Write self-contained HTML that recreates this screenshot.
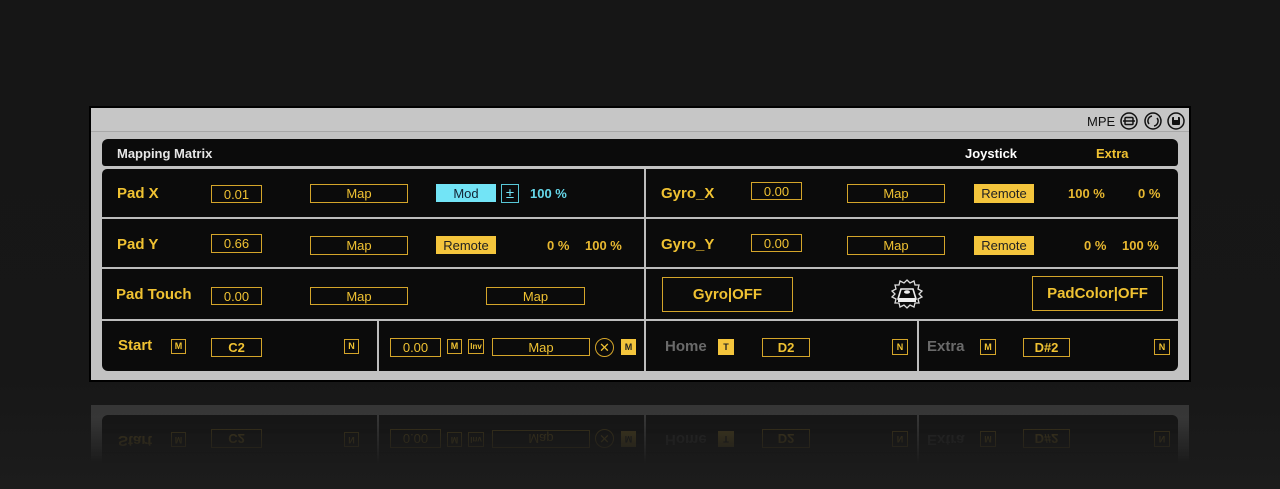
<!DOCTYPE html>
<html><head><meta charset="utf-8"><style>
*{margin:0;padding:0;box-sizing:border-box}
html,body{width:1280px;height:489px;overflow:hidden;background:#171717;font-family:"Liberation Sans",Arial,sans-serif}
.a{position:absolute}
.t{position:absolute;font-weight:bold;color:#f0c232;white-space:nowrap;line-height:1}
.b{position:absolute;border:1.5px solid #d4a52a;color:#f0c232;font-size:13px;display:flex;align-items:center;justify-content:center;line-height:1}
.f{background:#f4c53c;color:#222;border-color:#f4c53c}
.s{font-size:9px;font-weight:bold;border-width:1.5px}
.hl{position:absolute;height:2px;background:#bdbdbd}
.vl{position:absolute;width:2px;background:#bdbdbd}
.pct{position:absolute;font-size:13px;font-weight:bold;color:#e8b830;line-height:1}
</style></head><body>
<div class="a" style="left:0;top:0;width:1280px;height:489px;background:linear-gradient(#161616 0,#171717 380px,#1c1c1c 489px)"></div>

<div class="a" style="left:89px;top:106px;width:1102px;height:276px;background:#000"></div>
<div class="a" style="left:91px;top:108px;width:1098px;height:272px;background:#c2c2c2"></div>
<div class="a" style="left:91px;top:108px;width:1098px;height:24px;background:#c6c6c6;border-bottom:1px solid #a8a8a8"></div>
<div class="t" style="left:1087px;top:115px;font-size:13px;font-weight:normal;color:#111">MPE</div>
<svg class="a" style="left:1119px;top:111px" width="68" height="20" viewBox="0 0 68 20">
<g fill="none" stroke="#111" stroke-width="1.5">
<circle cx="10" cy="10" r="8"/><circle cx="34" cy="10" r="8"/><circle cx="57" cy="10" r="8"/>
<rect x="6" y="6.5" width="8" height="7" rx="1"/><path d="M4 10h12"/>
<path d="M30 13a5 5 0 0 1 3-8M38 7a5 5 0 0 1-3 8"/>
</g><rect x="53" y="6" width="8" height="8" rx="1" fill="#111"/><rect x="55" y="6" width="4" height="3" fill="#c6c6c6"/>
</svg>

<div class="a" style="left:102px;top:139px;width:1076px;height:27px;background:#0b0b0b;border-radius:6px 6px 3px 3px"></div>
<div class="t" style="left:117px;top:147px;font-size:13px;color:#e6e6e6">Mapping Matrix</div>
<div class="t" style="left:965px;top:147px;font-size:13px;color:#fff">Joystick</div>
<div class="t" style="left:1096px;top:147px;font-size:13px">Extra</div>

<div class="a" style="left:102px;top:169px;width:1076px;height:202px;background:#0b0b0b;border-radius:5px 5px 6px 6px"></div>
<div class="hl" style="left:102px;top:217px;width:1076px"></div>
<div class="hl" style="left:102px;top:267px;width:1076px"></div>
<div class="hl" style="left:102px;top:319px;width:1076px"></div>
<div class="vl" style="left:644px;top:169px;height:202px"></div>
<div class="vl" style="left:377px;top:320px;height:51px"></div>
<div class="vl" style="left:917px;top:320px;height:51px"></div>

<div class="t" style="left:117px;top:186px;font-size:15px">Pad X</div>
<div class="b" style="left:211px;top:185px;width:51px;height:18px">0.01</div>
<div class="b" style="left:310px;top:184px;width:98px;height:19px">Map</div>
<div class="b" style="left:436px;top:184px;width:60px;height:18px;background:#72e4f6;border-color:#72e4f6;color:#123">Mod</div>
<div class="b" style="left:501px;top:184px;width:18px;height:19px;border-color:#58c8d8;color:#72e4f6;font-size:15px">±</div>
<div class="pct" style="left:530px;top:187px;color:#66d8ea">100 %</div>
<div class="t" style="left:661px;top:186px;font-size:15px">Gyro_X</div>
<div class="b" style="left:751px;top:182px;width:51px;height:18px">0.00</div>
<div class="b" style="left:847px;top:184px;width:98px;height:19px">Map</div>
<div class="b f" style="left:974px;top:184px;width:60px;height:19px">Remote</div>
<div class="pct" style="left:1068px;top:187px">100 %</div>
<div class="pct" style="left:1138px;top:187px">0 %</div>

<div class="t" style="left:117px;top:237px;font-size:15px">Pad Y</div>
<div class="b" style="left:211px;top:234px;width:51px;height:19px">0.66</div>
<div class="b" style="left:310px;top:236px;width:98px;height:19px">Map</div>
<div class="b f" style="left:436px;top:236px;width:60px;height:18px">Remote</div>
<div class="pct" style="left:547px;top:239px">0 %</div>
<div class="pct" style="left:585px;top:239px">100 %</div>
<div class="t" style="left:661px;top:237px;font-size:15px">Gyro_Y</div>
<div class="b" style="left:751px;top:234px;width:51px;height:18px">0.00</div>
<div class="b" style="left:847px;top:236px;width:98px;height:19px">Map</div>
<div class="b f" style="left:974px;top:236px;width:60px;height:19px">Remote</div>
<div class="pct" style="left:1084px;top:239px">0 %</div>
<div class="pct" style="left:1122px;top:239px">100 %</div>

<div class="t" style="left:116px;top:287px;font-size:15px">Pad Touch</div>
<div class="b" style="left:211px;top:287px;width:51px;height:18px">0.00</div>
<div class="b" style="left:310px;top:287px;width:98px;height:18px">Map</div>
<div class="b" style="left:486px;top:287px;width:99px;height:18px">Map</div>
<div class="b" style="left:662px;top:277px;width:131px;height:35px;font-weight:bold;font-size:15px">Gyro|OFF</div>
<svg class="a" style="left:889px;top:278px" width="36" height="34" viewBox="0 0 36 34">
<path d="M18 2l3 3 4-2 1 4 4 0-1 4 4 2-3 3 3 3-4 2 1 4-4 0-1 4-4-2-3 3-3-3-4 2-1-4-4 0 1-4-4-2 3-3-3-3 4-2-1-4 4 0 1-4 4 2z" fill="none" stroke="#ddd" stroke-width="1.3"/>
<path d="M12 11h12l3 10H9z" fill="none" stroke="#eee" stroke-width="1.6"/>
<ellipse cx="18" cy="14" rx="3" ry="1.8" fill="#eee"/>
<rect x="9" y="20" width="18" height="4" fill="#eee"/>
</svg>
<div class="b" style="left:1032px;top:276px;width:131px;height:35px;font-weight:bold;font-size:15px">PadColor|OFF</div>

<div class="t" style="left:118px;top:338px;font-size:15px">Start</div>
<div class="b s" style="left:171px;top:339px;width:15px;height:15px">M</div>
<div class="b" style="left:211px;top:338px;width:51px;height:19px;font-weight:bold">C2</div>
<div class="b s" style="left:344px;top:339px;width:15px;height:15px">N</div>
<div class="b" style="left:390px;top:338px;width:51px;height:19px">0.00</div>
<div class="b s" style="left:447px;top:339px;width:15px;height:15px">M</div>
<div class="b s" style="left:468px;top:339px;width:16px;height:15px;font-size:8px">Inv</div>
<div class="b" style="left:492px;top:338px;width:98px;height:18px">Map</div>
<div class="b" style="left:595px;top:338px;width:19px;height:19px;border-radius:50%;font-size:13px">✕</div>
<div class="b s f" style="left:621px;top:339px;width:15px;height:16px">M</div>
<div class="t" style="left:665px;top:339px;font-size:15px;color:#6a6a6a">Home</div>
<div class="b s f" style="left:718px;top:339px;width:16px;height:16px">T</div>
<div class="b" style="left:762px;top:338px;width:48px;height:19px;font-weight:bold">D2</div>
<div class="b s" style="left:892px;top:339px;width:16px;height:16px">N</div>
<div class="t" style="left:927px;top:339px;font-size:15px;color:#6a6a6a">Extra</div>
<div class="b s" style="left:980px;top:339px;width:16px;height:16px">M</div>
<div class="b" style="left:1023px;top:338px;width:47px;height:19px;font-weight:bold">D#2</div>
<div class="b s" style="left:1154px;top:339px;width:16px;height:16px">N</div>

<!-- reflection -->
<div class="a" style="left:0;top:393px;width:1280px;height:80px;overflow:hidden;-webkit-mask-image:linear-gradient(#000 0,#000 25px,transparent 70px);mask-image:linear-gradient(#000 0,#000 25px,transparent 70px)">
 <div class="a" style="left:0;top:-93px;width:1280px;height:93px;transform:scaleY(-1);transform-origin:50% 100%;opacity:0.18">
  <div class="a" style="left:91px;top:0;width:1098px;height:81px;background:#c2c2c2"></div>
  <div class="a" style="left:102px;top:0;width:1076px;height:71px;background:#0b0b0b;border-radius:0 0 6px 6px"></div>
  <div class="vl" style="left:377px;top:20px;height:51px"></div>
  <div class="vl" style="left:644px;top:20px;height:51px"></div>
  <div class="vl" style="left:917px;top:20px;height:51px"></div>
  <div class="t" style="left:118px;top:38px;font-size:15px">Start</div>
  <div class="b s" style="left:171px;top:39px;width:15px;height:15px">M</div>
  <div class="b" style="left:211px;top:38px;width:51px;height:19px;font-weight:bold">C2</div>
  <div class="b s" style="left:344px;top:39px;width:15px;height:15px">N</div>
  <div class="b" style="left:390px;top:38px;width:51px;height:19px">0.00</div>
  <div class="b s" style="left:447px;top:39px;width:15px;height:15px">M</div>
  <div class="b s" style="left:468px;top:39px;width:16px;height:15px;font-size:8px">Inv</div>
  <div class="b" style="left:492px;top:38px;width:98px;height:18px">Map</div>
  <div class="b" style="left:595px;top:38px;width:19px;height:19px;border-radius:50%">✕</div>
  <div class="b s f" style="left:621px;top:39px;width:15px;height:16px">M</div>
  <div class="t" style="left:665px;top:39px;font-size:15px;color:#6a6a6a">Home</div>
  <div class="b s f" style="left:718px;top:39px;width:16px;height:16px">T</div>
  <div class="b" style="left:762px;top:38px;width:48px;height:19px;font-weight:bold">D2</div>
  <div class="b s" style="left:892px;top:39px;width:16px;height:16px">N</div>
  <div class="t" style="left:927px;top:39px;font-size:15px;color:#6a6a6a">Extra</div>
  <div class="b s" style="left:980px;top:39px;width:16px;height:16px">M</div>
  <div class="b" style="left:1023px;top:38px;width:47px;height:19px;font-weight:bold">D#2</div>
  <div class="b s" style="left:1154px;top:39px;width:16px;height:16px">N</div>
 </div>
</div>
</body></html>
